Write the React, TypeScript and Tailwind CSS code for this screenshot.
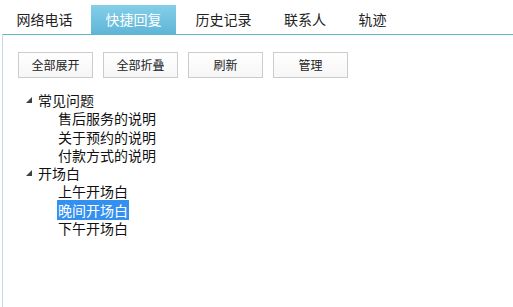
import React from 'react';

const tabs = [
	{ label: '网络电话', w: 'w-[89px] mr-[2px]' },
	{ label: '快捷回复', w: 'w-[85px]' },
	{ label: '历史记录', w: 'w-[95px]' },
	{ label: '联系人', w: 'w-[68px]' },
	{ label: '轨迹', w: 'w-[67px]' },
];
const actions = ['全部展开', '全部折叠', '刷新', '管理'];

const tree = [
	{ label: '常见问题', children: ['售后服务的说明', '关于预约的说明', '付款方式的说明'] },
	{ label: '开场白', children: ['上午开场白', '晚间开场白', '下午开场白'] },
];

const FONT = { fontFamily: '"Noto Sans CJK SC", "Liberation Sans", sans-serif' };

function Caret() {
	return (
		<svg width="7" height="7" viewBox="0 0 7 7" className="shrink-0">
			<polygon points="6,0 6,6 0,6" fill="#404040" />
		</svg>
	);
}

export default function App() {
	const selected = '晚间开场白';

	return (
		<div className="w-[513px] h-[307px] bg-white flex flex-col overflow-hidden" style={FONT}>
			<div className="flex items-end h-[34px] shrink-0">
				{tabs.map((t, i) => (
					<div
						key={t.label}
						className={
							i === 1
								? `${t.w} h-[29px] flex items-center justify-center text-[14px] text-white bg-gradient-to-b from-[#84cfe8] to-[#5fb5d7]`
								: `${t.w} h-[29px] flex items-center justify-center text-[14px] text-[#222]`
						}
					>
						{t.label}
					</div>
				))}
			</div>
			<div className="flex-1 ml-[2px] border-t border-t-[#5eb9c6] border-l border-l-[#c8d7e4] flex flex-col">
				<div className="flex gap-[10px] pl-[15px] pt-[17px]">
					{actions.map((a) => (
						<button
							key={a}
							className="w-[75px] h-[26px] border border-[#cccccc] bg-gradient-to-b from-white to-[#f6f6f6] text-[12px] text-[#222] flex items-center justify-center"
						>
							{a}
						</button>
					))}
				</div>
				<div className="pl-[23px] pt-[13px] text-[14px] text-[#111] leading-[18.3px]">
					{tree.map((g) => (
						<div key={g.label}>
							<div className="flex items-center gap-[5px]">
								<Caret />
								<span>{g.label}</span>
							</div>
							{g.children.map((c) => (
								<div key={c} className="pl-[31px]">
									<span className={c === selected ? 'bg-[#3390f0] text-white px-[1px]' : 'px-[1px]'}>{c}</span>
								</div>
							))}
						</div>
					))}
				</div>
			</div>
		</div>
	);
}
